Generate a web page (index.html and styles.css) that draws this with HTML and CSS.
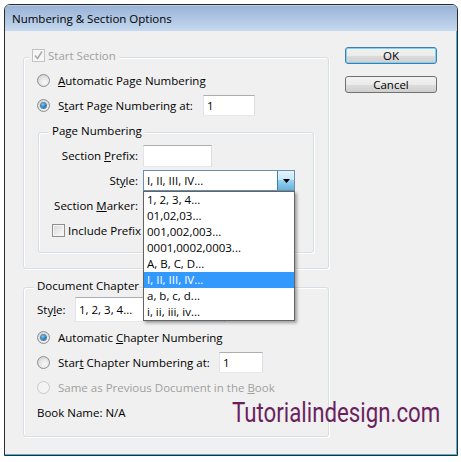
FILE: index.html
```html
<!DOCTYPE html>
<html>
<head>
<meta charset="utf-8">
<link rel="stylesheet" href="styles.css">
</head>
<body>
<div class="window">
  <div class="titlebar">Numbering &amp; Section Options</div>
  <div class="client">
    <div class="left">
      <div class="group g1">
        <div class="gtitle gt1">
          <span class="check disabled"><svg width="11" height="11" viewBox="0 0 11 11"><path d="M2 5.5 L4.5 8.5 L9 1.5" fill="none" stroke="#a6a6a6" stroke-width="1.4"/></svg></span>
          <span class="dis">Start Section</span>
        </div>
        <div class="rows">
          <div class="row"><span class="radio"></span><span class="lbl"><u>A</u>utomatic Page Numbering</span></div>
          <div class="row"><span class="radio on"></span><span class="lbl w145">S<u>t</u>art Page Numbering at:</span><span class="input w52">1</span></div>
        </div>
        <div class="group g1b">
          <div class="gtitle">Page Numbering</div>
          <div class="rows">
            <div class="row"><span class="flabel">Section <u>P</u>refix:</span><span class="input w69 h22"></span></div>
            <div class="row"><span class="flabel">St<u>y</u>le:</span>
              <span class="select open">
                <span class="sel-text">I, II, III, IV...</span>
                <span class="sel-btn"><svg width="7" height="4" viewBox="0 0 7 4"><path d="M0 0 H7 L3.5 4 Z" fill="#000"/></svg></span>
                <span class="dropdown">
                  <span class="item">1, 2, 3, 4...</span>
                  <span class="item">01,02,03...</span>
                  <span class="item">001,002,003...</span>
                  <span class="item">0001,0002,0003...</span>
                  <span class="item">A, B, C, D...</span>
                  <span class="item hl">I, II, III, IV...</span>
                  <span class="item">a, b, c, d...</span>
                  <span class="item">i, ii, iii, iv...</span>
                </span>
              </span>
            </div>
            <div class="row"><span class="flabel">Section <u>M</u>arker:</span><span class="input w152"></span></div>
            <div class="row"><span class="check"></span><span class="lbl2">Include Prefix</span></div>
          </div>
        </div>
      </div>
      <div class="group g2">
        <div class="gtitle gt2">Document Chapter</div>
        <div class="rows">
          <div class="row"><span class="slabel">Sty<u>l</u>e:</span><span class="select2">1, 2, 3, 4...</span></div>
        </div>
        <div class="rows2">
          <div class="row"><span class="radio on"></span><span class="lbl">Automatic <u>C</u>hapter Numbering</span></div>
          <div class="row"><span class="radio"></span><span class="lbl w161">Star<u>t</u> Chapter Numbering at:</span><span class="input w44">1</span></div>
          <div class="row"><span class="radio disabled"></span><span class="lbl dis">Same as Previous Document in the <u>B</u>ook</span></div>
          <div class="row"><span class="plain">Book Name: N/A</span></div>
        </div>
      </div>
    </div>
    <div class="buttons">
      <div class="btn default">OK</div>
      <div class="btn">Cancel</div>
    </div>
  </div>
  <div class="watermark">Tutorialindesign.com</div>
</div>
</body>
</html>
```
FILE: styles.css
```css
body {
  margin: 0;
  background: #ffffff;
  font-family: "Open Sans", "Noto Sans", sans-serif;
  font-size: 11.5px;
  color: #000;
}
u { text-decoration: underline; text-underline-offset: 1px; }

.window {
  margin: 4px 0 0 4px;
  width: 454px;
  height: 452px;
  box-sizing: border-box;
  border: 1px solid #2c2c2c;
  border-radius: 6px 6px 0 0;
  position: relative;
  display: flex;
  flex-direction: column;
  overflow: hidden;
  background: #f0f0f0;
}
.titlebar {
  height: 26px;
  flex: none;
  box-sizing: border-box;
  background: linear-gradient(#97b2d6, #c6d9ef);
  box-shadow: inset 0 1px 0 #b9cde6;
  padding-left: 7px;
  display: flex;
  align-items: center;
  font-size: 11.5px;
  color: #000;
}
.client {
  flex: 1;
  display: flex;
  background: #f0f0f0;
  border-bottom: 1px solid #3fb9e4;
  border-right: 1px solid #3fb9e4;
  padding-left: 18px;
}
.left {
  width: 306px;
  padding-top: 26px;
}
.group {
  border: 1px solid #d5dfe5;
  border-radius: 3px;
  box-shadow: inset 1px 1px 0 #ffffff, 1px 1px 0 #ffffff;
}
.gtitle {
  height: 16px;
  margin-top: -11px;
  margin-left: -3px;
  padding: 0 3px;
  background: #f0f0f0;
  width: max-content;
  display: flex;
  align-items: center;
  gap: 3px;
  white-space: nowrap;
}
.gt1 { margin-left: -8px; }
.gt2 { padding-right: 0; }
.g1 {
  padding: 0 14px 15px 13px;
}
.rows { margin-top: 5px; }
.g1b {
  margin-top: 14px;
  margin-left: 1px;
  padding: 0 10px 9px 13px;
}
.g2 {
  margin-top: 18px;
  padding: 0 14px 11px 13px;
}
.g2 .rows { margin-top: 4px; }
.rows2 { margin-top: 3px; }

.row {
  height: 25px;
  display: flex;
  align-items: center;
  white-space: nowrap;
}
.lbl { margin-left: 8px; }
.lbl2 { margin-left: 3px; }
.w145 { width: 145px; flex: none; }
.w161 { width: 161px; flex: none; }
.dis { color: #a0a0a0; }
.flabel {
  width: 86px;
  flex: none;
  text-align: right;
  margin-right: 5px;
}
.slabel { width: 38px; flex: none; }

.radio {
  width: 13px;
  height: 13px;
  box-sizing: border-box;
  border-radius: 50%;
  border: 1px solid #8c8e90;
  background: radial-gradient(circle at 60% 65%, #fafafa 0, #e6e6e6 45%, #c9c9c9 100%);
  display: flex;
  align-items: center;
  justify-content: center;
  flex: none;
}
.radio.on::after {
  content: "";
  width: 5px;
  height: 5px;
  border-radius: 50%;
  background: radial-gradient(circle at 40% 35%, #7fd6ff 0, #1b7fc4 55%, #0b3e6a 100%);
  box-shadow: 0 0 0 1px #5e7f99;
}
.radio.disabled {
  border-color: #c9cbcc;
  background: #f3f3f3;
}
.check {
  width: 13px;
  height: 13px;
  box-sizing: border-box;
  border: 1px solid #8e8f8f;
  background: linear-gradient(135deg, #d6d6d6, #fcfcfc);
  box-shadow: inset 0 0 0 1px #f4f4f4;
  display: flex;
  align-items: center;
  justify-content: center;
  flex: none;
}
.check.disabled {
  border-color: #c2c2c2;
  background: #f6f6f6;
  box-shadow: none;
}
.input {
  height: 21px;
  box-sizing: border-box;
  background: #fff;
  border: 1px solid #abadb3;
  border-left-color: #e2e3ea;
  border-right-color: #dbdfe6;
  border-bottom-color: #e3e9ef;
  padding-left: 3px;
  display: flex;
  align-items: center;
  flex: none;
}
.h22 { height: 22px; }
.w52 { width: 52px; }
.w44 { width: 44px; }
.w69 { width: 69px; }
.w152 { width: 152px; }

.select {
  position: relative;
  width: 152px;
  height: 21px;
  box-sizing: border-box;
  border: 1px solid #6b8fae;
  background: #fff;
  display: flex;
  align-items: center;
  flex: none;
}
.sel-text { padding-left: 3px; flex: 1; }
.sel-btn {
  width: 17px;
  height: 19px;
  box-sizing: border-box;
  border-left: 1px solid #3c7fb1;
  background: linear-gradient(#e5f4fc, #c4e5f6 50%, #98d1ef 50%, #68b3db);
  display: flex;
  align-items: center;
  justify-content: center;
}
.dropdown {
  position: absolute;
  left: -1px;
  top: 20px;
  width: 152px;
  box-sizing: border-box;
  border: 1px solid #646464;
  background: #fff;
  box-shadow: 2px 2px 3px rgba(0, 0, 0, 0.35);
  display: flex;
  flex-direction: column;
  z-index: 5;
}
.item {
  height: 16px;
  line-height: 16px;
  padding-left: 3px;
}
.item.hl {
  background: #3399ff;
  color: #fff;
}
.select2 {
  width: 150px;
  height: 25px;
  box-sizing: border-box;
  border: 1px solid #abadb3;
  border-left-color: #e2e3ea;
  border-bottom-color: #e3e9ef;
  background: #fff;
  padding-left: 3px;
  display: flex;
  align-items: center;
}

.buttons {
  margin-left: 16px;
  padding-top: 16px;
  display: flex;
  flex-direction: column;
  gap: 12px;
}
.btn {
  width: 92px;
  height: 17px;
  box-sizing: border-box;
  border: 1px solid #707070;
  border-radius: 3px;
  background: linear-gradient(#f2f2f2, #ebebeb 50%, #dddddd 50%, #cfcfcf);
  display: flex;
  align-items: center;
  justify-content: center;
}
.btn.default {
  border-color: #3c7fb1;
  box-shadow: inset 0 0 0 1px #7fd2f5;
}
.watermark {
  position: absolute;
  left: 227px;
  top: 394px;
  font-family: Roboto, "Open Sans", sans-serif;
  font-size: 28px;
  line-height: 28px;
  color: #6b1f5e;
  transform: scaleX(0.795);
  transform-origin: left top;
  white-space: nowrap;
  z-index: 6;
}
```
